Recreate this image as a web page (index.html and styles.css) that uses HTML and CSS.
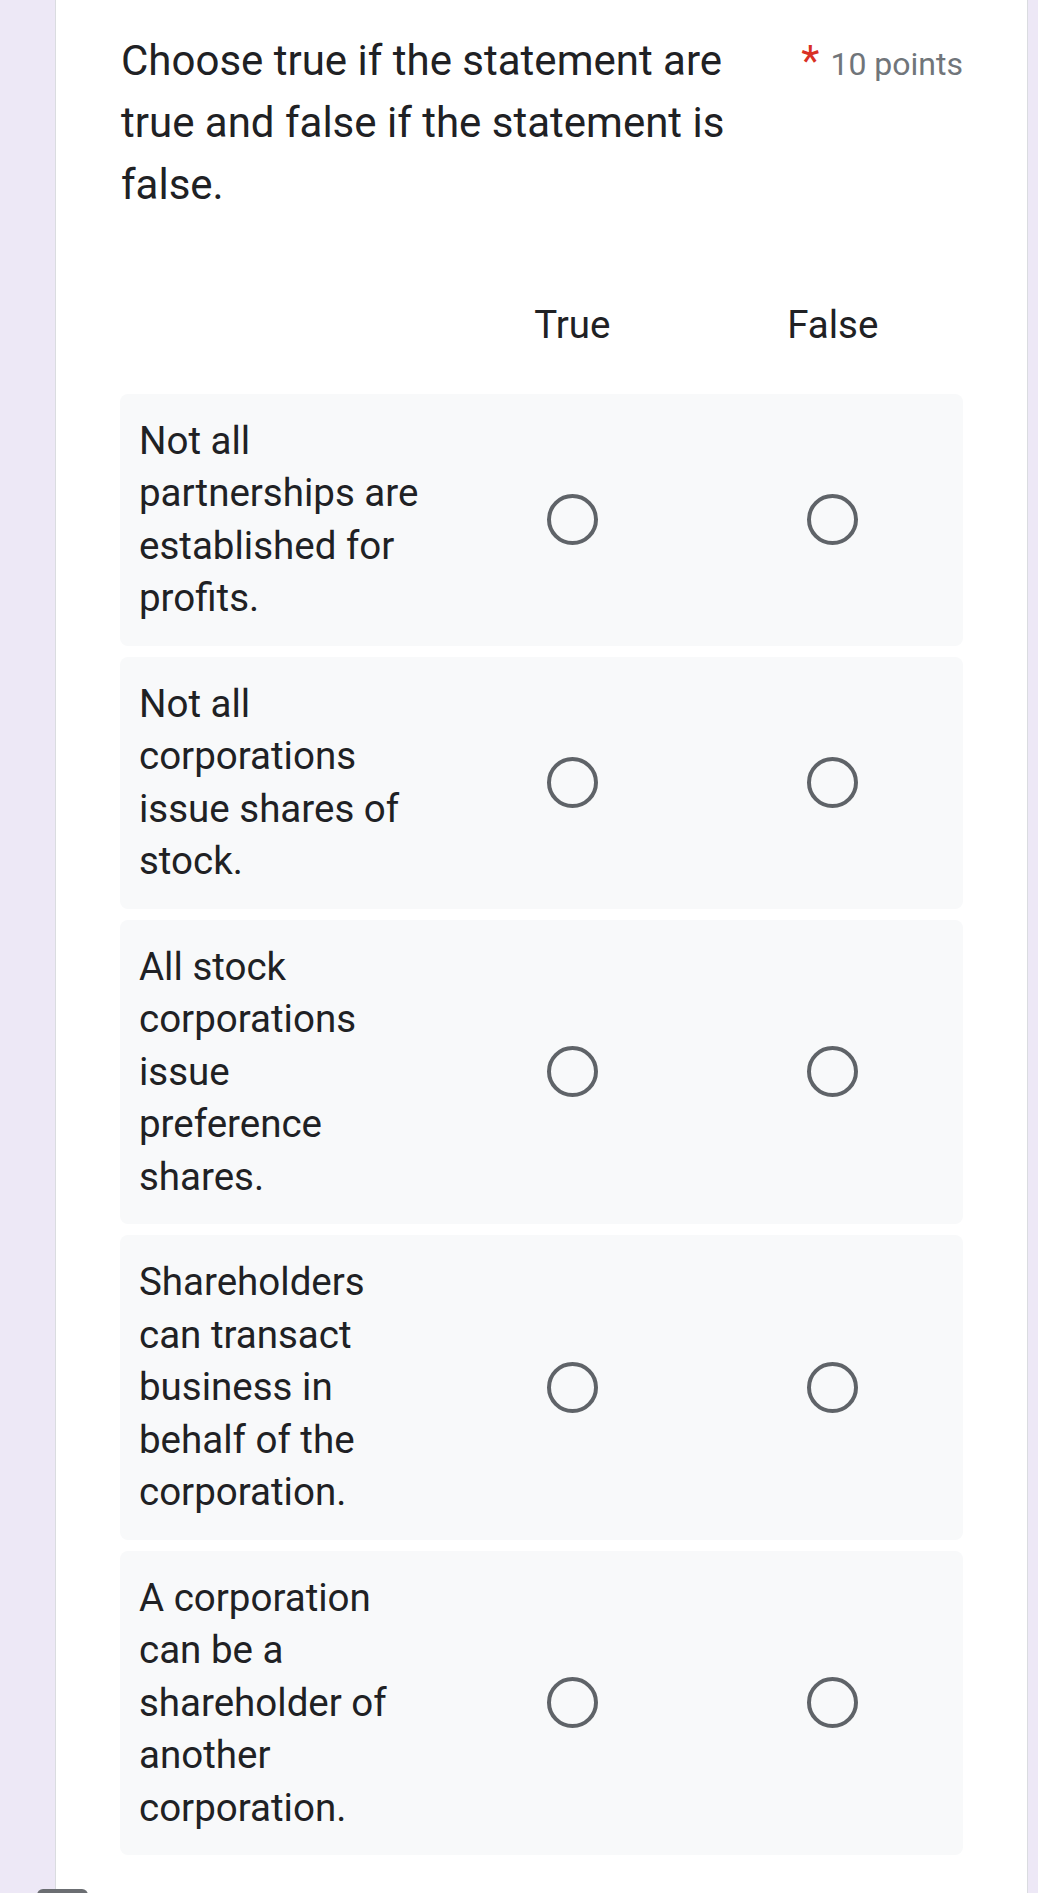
FILE: index.html
```html
<!DOCTYPE html>
<html lang="en">
<head>
<meta charset="utf-8">
<title>Grid question</title>
<link rel="stylesheet" href="styles.css">
</head>
<body>
<div class="card">
  <div class="qhead">
    <div class="qtitle">Choose true if the statement are true and false if the statement is false.</div>
    <span class="req">*</span>
    <span class="points">10 points</span>
  </div>

  <div class="grid-head">
    <div></div>
    <div class="col-label">True</div>
    <div class="col-label">False</div>
  </div>

  <div class="rows">
    <div class="row">
      <div class="label">Not all<br>partnerships are<br>established for<br>profits.</div>
      <div class="cell"><span class="radio"></span></div>
      <div class="cell"><span class="radio"></span></div>
    </div>
    <div class="row">
      <div class="label">Not all<br>corporations<br>issue shares of<br>stock.</div>
      <div class="cell"><span class="radio"></span></div>
      <div class="cell"><span class="radio"></span></div>
    </div>
    <div class="row">
      <div class="label">All stock<br>corporations<br>issue<br>preference<br>shares.</div>
      <div class="cell"><span class="radio"></span></div>
      <div class="cell"><span class="radio"></span></div>
    </div>
    <div class="row">
      <div class="label">Shareholders<br>can transact<br>business in<br>behalf of the<br>corporation.</div>
      <div class="cell"><span class="radio"></span></div>
      <div class="cell"><span class="radio"></span></div>
    </div>
    <div class="row">
      <div class="label">A corporation<br>can be a<br>shareholder of<br>another<br>corporation.</div>
      <div class="cell"><span class="radio"></span></div>
      <div class="cell"><span class="radio"></span></div>
    </div>
  </div>
</div>
<div class="corner-tab"></div>
</body>
</html>
```

FILE: styles.css
```css
html, body {
  margin: 0;
  padding: 0;
}

body {
  background: #ede8f6;
  font-family: Roboto, "Noto Sans", "Liberation Sans", sans-serif;
  color: #202124;
  position: relative;
  min-height: 1893px;
  overflow: hidden;
}

.card {
  margin-left: 55px;
  width: 973px;
  background: #ffffff;
  border: 1px solid #dadce0;
  border-top: none;
  padding: 30px 64px 80px 64px;
  box-sizing: border-box;
}

.qhead {
  display: flex;
  align-items: baseline;
  padding-left: 1px;
}

.qtitle {
  flex: 1;
  max-width: 650px;
  font-size: 42px;
  line-height: 62px;
  margin-right: auto;
}

.req {
  color: #d93025;
  font-size: 42px;
  line-height: 62px;
  margin-left: 16px;
}

.points {
  font-size: 32px;
  color: #70757a;
  margin-left: 11px;
  margin-right: 0;
  white-space: nowrap;
}

.grid-head {
  display: grid;
  grid-template-columns: 322px 1fr 1fr;
  margin-top: 83px;
  font-size: 38.5px;
  line-height: 52.5px;
}

.col-label {
  text-align: center;
}

.rows {
  display: flex;
  flex-direction: column;
  gap: 11px;
  margin-top: 42px;
}

.row {
  display: grid;
  grid-template-columns: 322px 1fr 1fr;
  align-items: center;
  background: #f8f9fa;
  border-radius: 8px;
  padding: 21px 0 21px;
}

.label {
  padding-left: 19px;
  font-size: 38.5px;
  line-height: 52.5px;
}

.cell {
  display: flex;
  justify-content: center;
  align-items: center;
}

.radio {
  display: block;
  width: 51px;
  height: 51px;
  box-sizing: border-box;
  border: 4px solid #5f6368;
  border-radius: 50%;
}

.corner-tab {
  position: absolute;
  left: 37px;
  top: 1889px;
  width: 51px;
  height: 20px;
  border-radius: 6px;
  background: #6b6e72;
}
```
